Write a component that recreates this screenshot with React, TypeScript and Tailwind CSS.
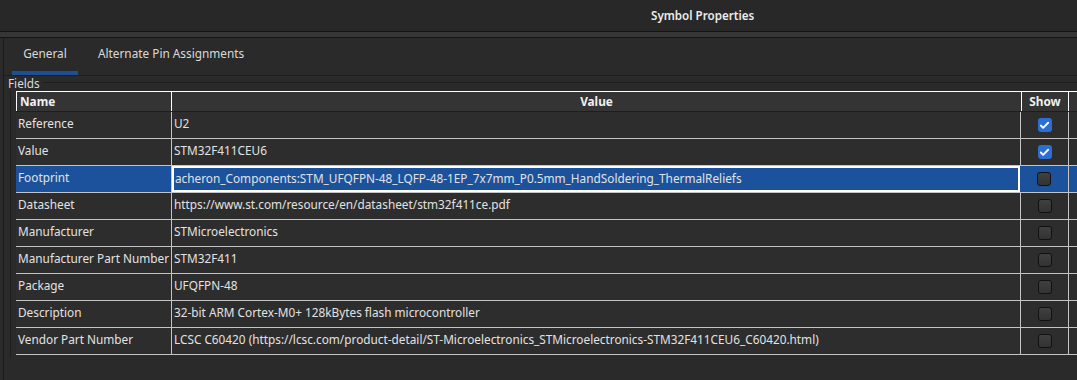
import { Check } from "lucide-react";

type Field = {
  name: string;
  value: string;
  show: boolean;
  selected?: boolean;
};

const fields: Field[] = [
  { name: "Reference", value: "U2", show: true },
  { name: "Value", value: "STM32F411CEU6", show: true },
  {
    name: "Footprint",
    value:
      "acheron_Components:STM_UFQFPN-48_LQFP-48-1EP_7x7mm_P0.5mm_HandSoldering_ThermalReliefs",
    show: false,
    selected: true,
  },
  {
    name: "Datasheet",
    value: "https://www.st.com/resource/en/datasheet/stm32f411ce.pdf",
    show: false,
  },
  { name: "Manufacturer", value: "STMicroelectronics", show: false },
  { name: "Manufacturer Part Number", value: "STM32F411", show: false },
  { name: "Package", value: "UFQFPN-48", show: false },
  {
    name: "Description",
    value: "32-bit ARM Cortex-M0+ 128kBytes flash microcontroller",
    show: false,
  },
  {
    name: "Vendor Part Number",
    value:
      "LCSC C60420 (https://lcsc.com/product-detail/ST-Microelectronics_STMicroelectronics-STM32F411CEU6_C60420.html)",
    show: false,
  },
];

function ShowBox({ checked }: { checked: boolean }) {
  if (checked) {
    return (
      <span className="flex h-[14px] w-[14px] items-center justify-center rounded-[3px] bg-[#2b6fd6]">
        <Check size={11} strokeWidth={4} className="text-white" />
      </span>
    );
  }
  return (
    <span className="h-[14px] w-[14px] rounded-[3px] border border-[#111] bg-gradient-to-b from-[#404040] to-[#333]" />
  );
}

export default function App() {
  return (
    <div className="h-[380px] w-[1077px] overflow-hidden whitespace-nowrap bg-[#2a2a2a] font-['Noto_Sans',sans-serif] text-[11.8px] text-[#e2e2e2]">
      {/* title bar */}
      <div className="flex h-[31px] items-center bg-[#282828] pl-[651px]">
        <span className="text-[11.6px] font-semibold text-[#ececec]">Symbol Properties</span>
      </div>
      <div className="h-[7px] border-y border-[#151515] bg-[#363636]" />

      <div className="ml-[3px] h-[342px] border-l border-[#1c1c1c] bg-[#2a2a2a]">
        {/* tabs */}
        <div className="flex h-[38px] items-end border-b border-[#1e1e1e] pl-[8px]">
          <div className="flex h-full w-[66px] flex-col items-center justify-end">
            <span className="pb-[8px] text-[#dadada]">General</span>
            <div className="h-[4px] w-full bg-[#1c4f94]" />
          </div>
          <div className="flex h-full flex-col justify-end pl-[20px]">
            <span className="pb-[12px] text-[#dadada]">Alternate Pin Assignments</span>
          </div>
        </div>

        {/* fields group */}
        <div className="relative pl-[5px] pt-[6px]">
          <div className="ml-[1px] h-[276px] border-l border-t border-[#1e1e1e] pl-[5px] pt-[8px]">
            <div className="w-[1100px] bg-[#2d2d2d]">
              {/* header */}
              <div className="flex h-[21px] border-b border-[#1e1e1e] bg-[#343434] font-bold text-[#f0f0f0]">
                <div className="flex w-[156px] items-center border-l border-t border-r border-white pl-[3px]">
                  Name
                </div>
                <div className="flex w-[849px] items-center justify-center border-t border-white">
                  Value
                </div>
                <div className="flex w-[48px] items-center justify-center border-l border-t border-r border-white">
                  Show
                </div>
                <div className="flex-1 border-t border-white" />
              </div>
              {fields.map((f) => (
                <div
                  key={f.name}
                  className={`flex h-[27px] border-b border-[#c4c4c4] ${f.selected ? "bg-[#1c529c]" : ""}`}
                >
                  <div className="flex w-[156px] items-center border-r border-[#c4c4c4] pb-[3px] pl-[2px]">
                    {f.name}
                  </div>
                  {f.selected ? (
                    <div className="flex w-[848px] items-center border-2 border-white pb-[1px] pl-[1px]">
                      {f.value}
                    </div>
                  ) : (
                    <div className="flex w-[848px] items-center pb-[3px] pl-[2px]">{f.value}</div>
                  )}
                  <div
                    className={`flex w-[49px] items-center justify-center border-r border-[#c4c4c4] ${f.selected ? "" : "border-l"}`}
                  >
                    <ShowBox checked={f.show} />
                  </div>
                  <div className="flex-1" />
                </div>
              ))}
            </div>
          </div>
          <span className="absolute left-[4px] top-0 bg-[#2a2a2a] pr-[3px] leading-[14px] text-[#dadada]">
            Fields
          </span>
        </div>
      </div>
    </div>
  );
}
